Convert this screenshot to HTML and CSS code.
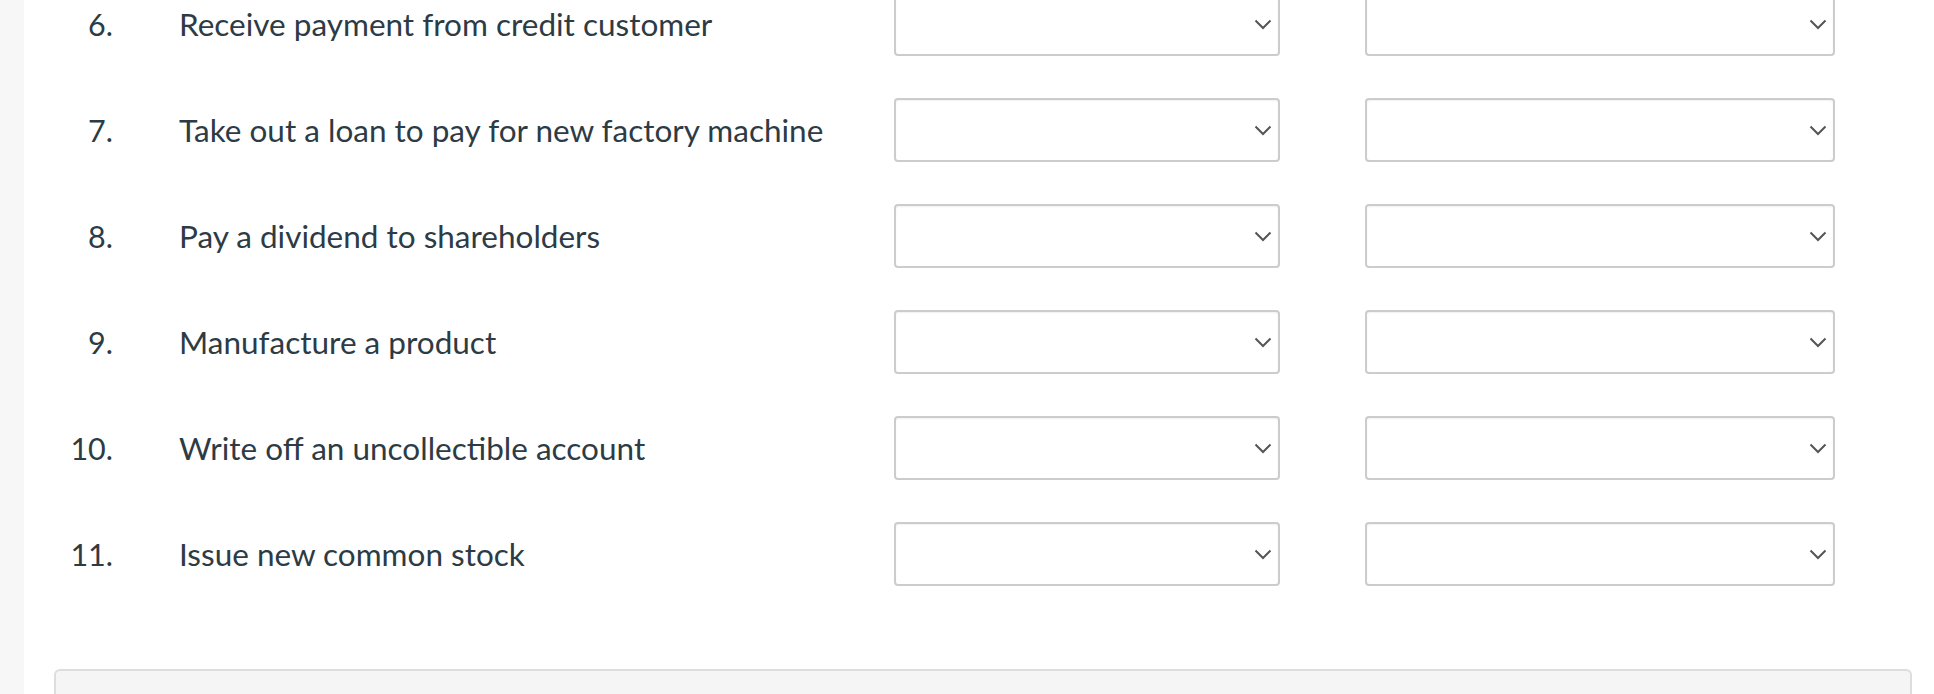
FILE: index.html
```html
<!DOCTYPE html>
<html lang="en">
<head>
<meta charset="utf-8">
<title>Quiz</title>
<link rel="stylesheet" href="styles.css">
</head>
<body>
<div class="page">
  <div class="strip"></div>
  <div class="content">
    <div class="rows">
      <div class="row">
        <div class="num">6.</div>
        <div class="label">Receive payment from credit customer</div>
        <div class="select sel-a"><svg class="chev" width="18" height="11" viewBox="0 0 18 11"><path d="M1.5 1.5 L9 9 L16.5 1.5"/></svg></div>
        <div class="select sel-b"><svg class="chev" width="18" height="11" viewBox="0 0 18 11"><path d="M1.5 1.5 L9 9 L16.5 1.5"/></svg></div>
      </div>
      <div class="row">
        <div class="num">7.</div>
        <div class="label">Take out a loan to pay for new factory machine</div>
        <div class="select sel-a"><svg class="chev" width="18" height="11" viewBox="0 0 18 11"><path d="M1.5 1.5 L9 9 L16.5 1.5"/></svg></div>
        <div class="select sel-b"><svg class="chev" width="18" height="11" viewBox="0 0 18 11"><path d="M1.5 1.5 L9 9 L16.5 1.5"/></svg></div>
      </div>
      <div class="row">
        <div class="num">8.</div>
        <div class="label">Pay a dividend to shareholders</div>
        <div class="select sel-a"><svg class="chev" width="18" height="11" viewBox="0 0 18 11"><path d="M1.5 1.5 L9 9 L16.5 1.5"/></svg></div>
        <div class="select sel-b"><svg class="chev" width="18" height="11" viewBox="0 0 18 11"><path d="M1.5 1.5 L9 9 L16.5 1.5"/></svg></div>
      </div>
      <div class="row">
        <div class="num">9.</div>
        <div class="label">Manufacture a product</div>
        <div class="select sel-a"><svg class="chev" width="18" height="11" viewBox="0 0 18 11"><path d="M1.5 1.5 L9 9 L16.5 1.5"/></svg></div>
        <div class="select sel-b"><svg class="chev" width="18" height="11" viewBox="0 0 18 11"><path d="M1.5 1.5 L9 9 L16.5 1.5"/></svg></div>
      </div>
      <div class="row">
        <div class="num">10.</div>
        <div class="label">Write off an uncollectible account</div>
        <div class="select sel-a"><svg class="chev" width="18" height="11" viewBox="0 0 18 11"><path d="M1.5 1.5 L9 9 L16.5 1.5"/></svg></div>
        <div class="select sel-b"><svg class="chev" width="18" height="11" viewBox="0 0 18 11"><path d="M1.5 1.5 L9 9 L16.5 1.5"/></svg></div>
      </div>
      <div class="row">
        <div class="num">11.</div>
        <div class="label">Issue new common stock</div>
        <div class="select sel-a"><svg class="chev" width="18" height="11" viewBox="0 0 18 11"><path d="M1.5 1.5 L9 9 L16.5 1.5"/></svg></div>
        <div class="select sel-b"><svg class="chev" width="18" height="11" viewBox="0 0 18 11"><path d="M1.5 1.5 L9 9 L16.5 1.5"/></svg></div>
      </div>
    </div>
    <div class="panel"></div>
  </div>
</div>
</body>
</html>
```

FILE: styles.css
```css
html, body {
  margin: 0;
  padding: 0;
  background: #ffffff;
  overflow: hidden;
}

.page {
  display: flex;
  height: 694px;
  font-family: Lato, "Noto Sans", sans-serif;
  color: #2d3b45;
}

.strip {
  flex: 0 0 24px;
  background: #f7f7f7;
}

.content {
  flex: 1;
  display: flex;
  flex-direction: column;
}

.rows {
  display: flex;
  flex-direction: column;
  gap: 42px;
  margin-top: -8px;
}

.row {
  display: flex;
  align-items: center;
  height: 64px;
}

.num {
  flex: 0 0 89px;
  text-align: right;
  font-size: 30.5px;
}

.label {
  flex: 0 0 781px;
  padding-left: 66px;
  box-sizing: border-box;
  font-size: 31.5px;
  white-space: nowrap;
}

.select {
  box-sizing: border-box;
  height: 64px;
  border: 2px solid #cccccc;
  border-radius: 4px;
  background: #ffffff;
  box-shadow: inset 0 1px 2px rgba(0, 0, 0, 0.06);
  display: flex;
  align-items: center;
  justify-content: flex-end;
  padding-right: 6px;
}

.sel-a {
  flex: 0 0 386px;
}

.sel-b {
  flex: 0 0 470px;
  margin-left: 85px;
}

.chev {
  display: block;
}

.chev path {
  fill: none;
  stroke: #555555;
  stroke-width: 2;
}

.panel {
  flex: 1;
  margin-top: 83px;
  margin-left: 30px;
  width: 1858px;
  box-sizing: border-box;
  background: #f5f5f5;
  border: 2px solid #dddddd;
  border-bottom: none;
  border-radius: 6px 6px 0 0;
}
```
